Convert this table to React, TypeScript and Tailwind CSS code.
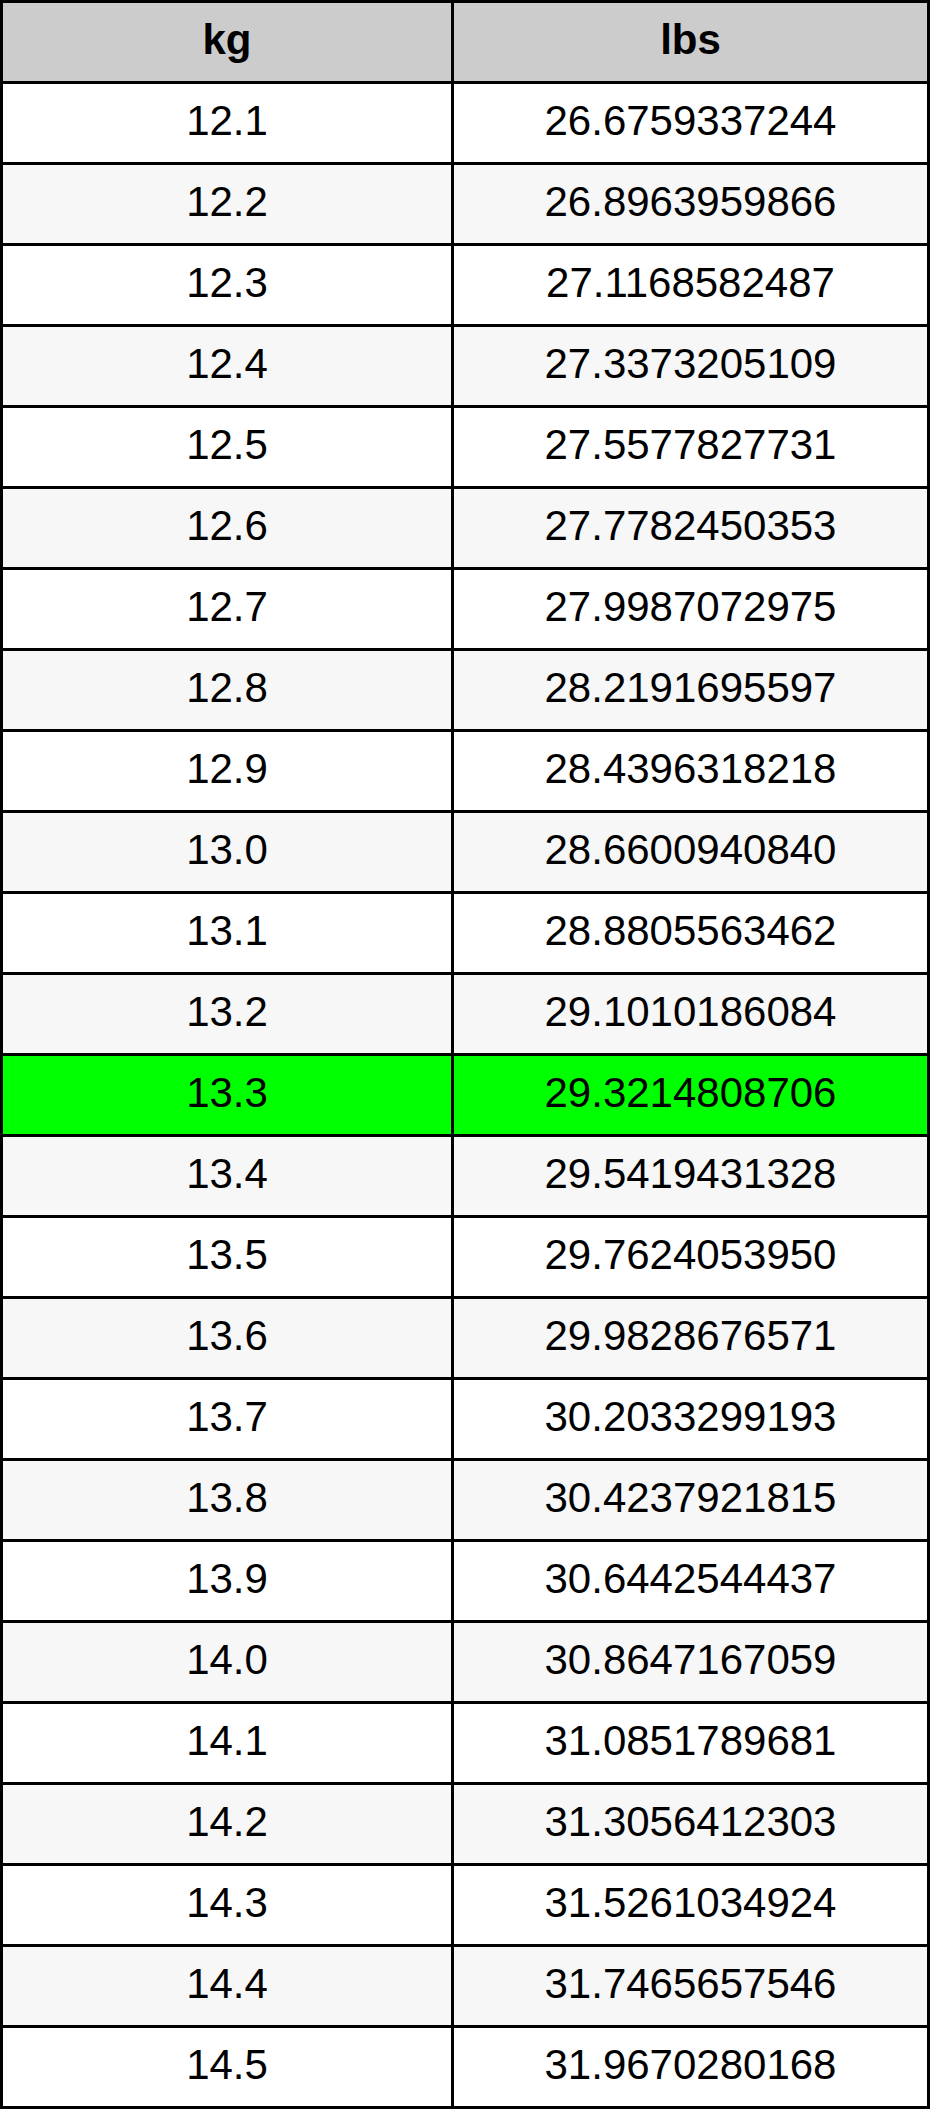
const ROWS: [string, string][] = [
  ["12.1", "26.6759337244"],
  ["12.2", "26.8963959866"],
  ["12.3", "27.1168582487"],
  ["12.4", "27.3373205109"],
  ["12.5", "27.5577827731"],
  ["12.6", "27.7782450353"],
  ["12.7", "27.9987072975"],
  ["12.8", "28.2191695597"],
  ["12.9", "28.4396318218"],
  ["13.0", "28.6600940840"],
  ["13.1", "28.8805563462"],
  ["13.2", "29.1010186084"],
  ["13.3", "29.3214808706"],
  ["13.4", "29.5419431328"],
  ["13.5", "29.7624053950"],
  ["13.6", "29.9828676571"],
  ["13.7", "30.2033299193"],
  ["13.8", "30.4237921815"],
  ["13.9", "30.6442544437"],
  ["14.0", "30.8647167059"],
  ["14.1", "31.0851789681"],
  ["14.2", "31.3056412303"],
  ["14.3", "31.5261034924"],
  ["14.4", "31.7465657546"],
  ["14.5", "31.9670280168"],
];

function Cell({ children, bold, wide }: { children: string; bold?: boolean; wide?: boolean }) {
  return (
    <div
      className={
        (wide ? "w-[473px]" : "w-[451px] border-r-[3px] border-black") +
        " flex h-[78px] items-center justify-center pb-[4px]"
      }
    >
      <span className={"text-[42px] leading-none text-black " + (bold ? "font-bold" : "font-normal")}>
        {children}
      </span>
    </div>
  );
}

export default function App() {
  return (
    <div className="bg-white w-[930px] h-[2115px]" style={{ fontFamily: '"Liberation Sans", Arial, sans-serif' }}>
      <div className="w-[930px] border-[3px] border-black">
        <div className="flex bg-[#cccccc] border-b-[3px] border-black">
          <Cell bold>kg</Cell>
          <Cell bold wide>
            lbs
          </Cell>
        </div>
        {ROWS.map(([kg, lbs], i) => {
          const bg = kg === "13.3" ? "bg-[#00ff00]" : i % 2 === 1 ? "bg-[#f7f7f7]" : "bg-white";
          const last = i === ROWS.length - 1;
          return (
            <div key={kg} className={"flex " + bg + (last ? "" : " border-b-[3px] border-black")}>
              <Cell>{kg}</Cell>
              <Cell wide>{lbs}</Cell>
            </div>
          );
        })}
      </div>
    </div>
  );
}
